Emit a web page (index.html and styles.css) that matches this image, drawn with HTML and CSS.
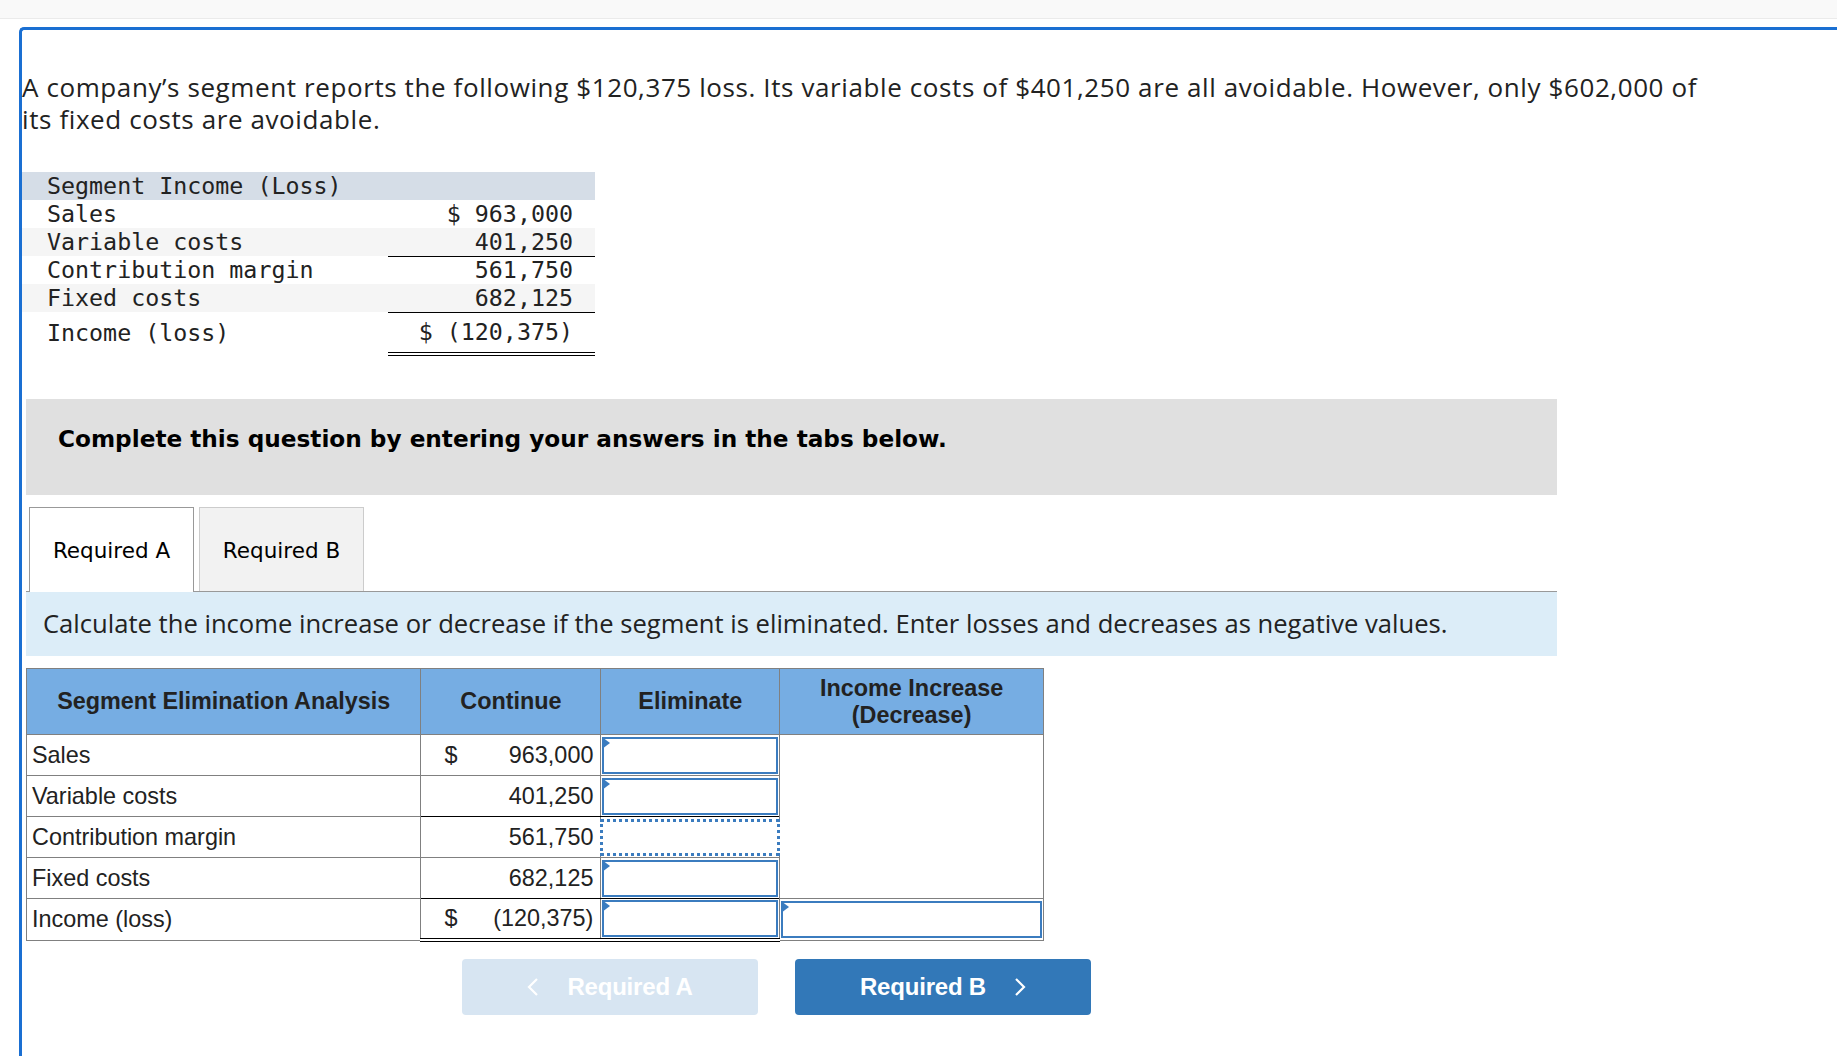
FILE: index.html
```html
<!DOCTYPE html>
<html lang="en">
<head>
<meta charset="utf-8">
<title>Segment Elimination</title>
<link rel="stylesheet" href="styles.css">
</head>
<body>
<div class="topbar"></div>
<div class="frame">
  <p class="intro">A company’s segment reports the following $120,375 loss. Its variable costs of $401,250 are all avoidable. However, only $602,000 of<br>its fixed costs are avoidable.</p>

  <table class="seg">
    <tr class="seg-head"><td class="lbl">Segment Income (Loss)</td><td class="num"></td></tr>
    <tr><td class="lbl">Sales</td><td class="num">$ 963,000</td></tr>
    <tr class="shade"><td class="lbl">Variable costs</td><td class="num ul">401,250</td></tr>
    <tr><td class="lbl">Contribution margin</td><td class="num">561,750</td></tr>
    <tr class="shade"><td class="lbl">Fixed costs</td><td class="num ul">682,125</td></tr>
    <tr class="total"><td class="lbl">Income (loss)</td><td class="num dbl">$ (120,375)</td></tr>
  </table>

  <div class="section">
    <div class="prompt">Complete this question by entering your answers in the tabs below.</div>

    <div class="tabs">
      <div class="tab active">Required A</div>
      <div class="tab">Required B</div>
    </div>

    <div class="instr">Calculate the income increase or decrease if the segment is eliminated. Enter losses and decreases as negative values.</div>

    <table class="analysis">
      <thead>
        <tr>
          <th class="c1">Segment Elimination Analysis</th>
          <th class="c2">Continue</th>
          <th class="c3">Eliminate</th>
          <th class="c4">Income Increase<br>(Decrease)</th>
        </tr>
      </thead>
      <tbody>
        <tr>
          <td class="c1">Sales</td>
          <td class="c2"><div class="amt"><span>$</span><span>963,000</span></div></td>
          <td class="c3"><div class="inp"><i class="flag"></i></div></td>
          <td class="c4 blank" rowspan="4"></td>
        </tr>
        <tr>
          <td class="c1">Variable costs</td>
          <td class="c2 bk"><div class="amt"><span></span><span>401,250</span></div></td>
          <td class="c3 bk"><div class="inp"><i class="flag"></i></div></td>
        </tr>
        <tr>
          <td class="c1">Contribution margin</td>
          <td class="c2 bkt"><div class="amt"><span></span><span>561,750</span></div></td>
          <td class="c3 bkt"><div class="inp dotted"></div></td>
        </tr>
        <tr>
          <td class="c1">Fixed costs</td>
          <td class="c2 bk"><div class="amt"><span></span><span>682,125</span></div></td>
          <td class="c3 bk"><div class="inp"><i class="flag"></i></div></td>
        </tr>
        <tr class="last">
          <td class="c1">Income (loss)</td>
          <td class="c2 bkt dd"><div class="amt"><span>$</span><span>(120,375)</span></div></td>
          <td class="c3 bkt dd"><div class="inp"><i class="flag"></i></div></td>
          <td class="c4"><div class="inp wide"><i class="flag"></i></div></td>
        </tr>
      </tbody>
    </table>

    <div class="nav">
      <button class="btn prev" type="button">
        <svg width="12" height="20" viewBox="0 0 12 20"><polyline points="10,2 2,10 10,18" fill="none" stroke="#fff" stroke-width="2.2"/></svg>
        <span>Required A</span>
      </button>
      <button class="btn next" type="button">
        <span>Required B</span>
        <svg width="12" height="20" viewBox="0 0 12 20"><polyline points="2,2 10,10 2,18" fill="none" stroke="#fff" stroke-width="2.2"/></svg>
      </button>
    </div>
  </div>
</div>
</body>
</html>
```

FILE: styles.css
```css
* { box-sizing: border-box; }

html, body {
  margin: 0;
  padding: 0;
  background: #ffffff;
  overflow: hidden;
}

body {
  width: 1837px;
  height: 1056px;
  color: #222222;
}

.topbar {
  height: 19px;
  background: #f9f9f9;
  border-bottom: 1px solid #ebebeb;
}

.frame {
  margin: 8px -60px 0 19px;
  height: 1200px;
  border-top: 3px solid #1a6fd2;
  border-left: 3px solid #1a6fd2;
  border-top-left-radius: 5px;
}

.intro {
  margin: 41px 0 0 0;
  font-family: "Open Sans", "Lato", sans-serif;
  font-size: 26px;
  letter-spacing: 0.6px;
  line-height: 32px;
  color: #222222;
}

/* Segment income table */
.seg {
  margin-top: 37px;
  border-collapse: collapse;
  width: 573px;
  font-family: "DejaVu Sans Mono", "Liberation Mono", monospace;
  font-size: 23.3px;
  color: #222222;
}

.seg td {
  padding: 0;
  height: 28px;
  line-height: 26px;
  vertical-align: middle;
}

.seg .lbl {
  padding-left: 25px;
  white-space: pre;
}

.seg .num {
  width: 207px;
  text-align: right;
  padding-right: 22px;
  white-space: pre;
}

.seg-head td { background: #d5dde7; height: 28px; }
.seg .shade td { background: #f5f5f5; }
.seg .num.ul { border-bottom: 1px solid #000; }
.seg .total td { height: 42px; }
.seg .num.dbl { border-bottom: 4px double #000; }

/* Section */
.section {
  margin-left: 4px;
  width: 1531px;
}

.prompt {
  margin-top: 43px;
  height: 96px;
  background: #e0e0e0;
  padding: 26px 0 0 32px;
  font-family: "DejaVu Sans", "Verdana", sans-serif;
  font-weight: bold;
  font-size: 23.2px;
  line-height: 28px;
  color: #000;
}

.tabs {
  display: flex;
  gap: 5px;
  margin-top: 12px;
  padding-left: 3px;
  border-bottom: 1px solid #999999;
  height: 85px;
}

.tab {
  width: 165px;
  height: 84px;
  display: flex;
  align-items: center;
  justify-content: center;
  padding-top: 1px;
  font-family: "DejaVu Sans", "Verdana", sans-serif;
  font-size: 21.5px;
  color: #000;
  background: #f2f2f2;
  border: 1px solid #cccccc;
  border-bottom: none;
}

.tab.active {
  background: #ffffff;
  border-color: #999999;
  height: 85px;
}

.instr {
  height: 64px;
  background: #dcedf8;
  padding: 17px 0 0 17px;
  font-family: "Open Sans", "Lato", sans-serif;
  font-size: 25.6px;
  line-height: 30px;
  color: #222222;
  white-space: nowrap;
}

/* Analysis table */
.analysis {
  margin-top: 12px;
  border-collapse: collapse;
  width: 1018px;
  font-family: "Liberation Sans", Arial, sans-serif;
  font-size: 23.4px;
  color: #222222;
}

.analysis th,
.analysis td {
  border: 1px solid #808080;
  padding: 0;
}

.analysis th {
  background: #76ade3;
  height: 66px;
  font-weight: bold;
  font-size: 23.4px;
  line-height: 27px;
  text-align: center;
}

.analysis .c1 { width: 395px; }
.analysis .c2 { width: 180px; }
.analysis .c3 { width: 179px; }
.analysis .c4 { width: 264px; }

.analysis td { height: 41px; }
.analysis td.c1 { padding-left: 5px; }

.analysis td.c2 { padding: 0 7px 0 23px; }

.amt {
  display: flex;
  justify-content: space-between;
}

.analysis td.c3 {
  padding: 1px 1px;
  position: relative;
}

.analysis td.c4 { padding: 1px 1px; position: relative; }

.inp {
  position: relative;
  height: 37px;
  border: 2px solid #3b7cbf;
  background: #fff;
}

.inp.dotted {
  border: 3px dotted #3b7cbf;
  margin: 0 -2px;
}

.flag {
  position: absolute;
  left: -2px;
  top: -2px;
  width: 0;
  height: 0;
  border-left: 8px solid #3b7cbf;
  border-top: 6px solid transparent;
  border-bottom: 6px solid transparent;
}

.analysis td.bk { border-bottom: 1px solid #000; }
.analysis td.bkt { border-top: 1px solid #000; }
.analysis td.dd { border-bottom: 4px double #000; }

/* Nav buttons */
.nav {
  display: flex;
  gap: 37px;
  margin: 17px 0 0 436px;
}

.btn {
  width: 296px;
  height: 56px;
  border: none;
  border-radius: 4px;
  display: flex;
  align-items: center;
  justify-content: center;
  gap: 28px;
  font-family: "Liberation Sans", Arial, sans-serif;
  font-weight: bold;
  font-size: 24px;
  color: #ffffff;
  letter-spacing: -0.2px;
}

.btn.prev { background: #d7e5f2; }
.btn.next { background: #3278b8; }
```
